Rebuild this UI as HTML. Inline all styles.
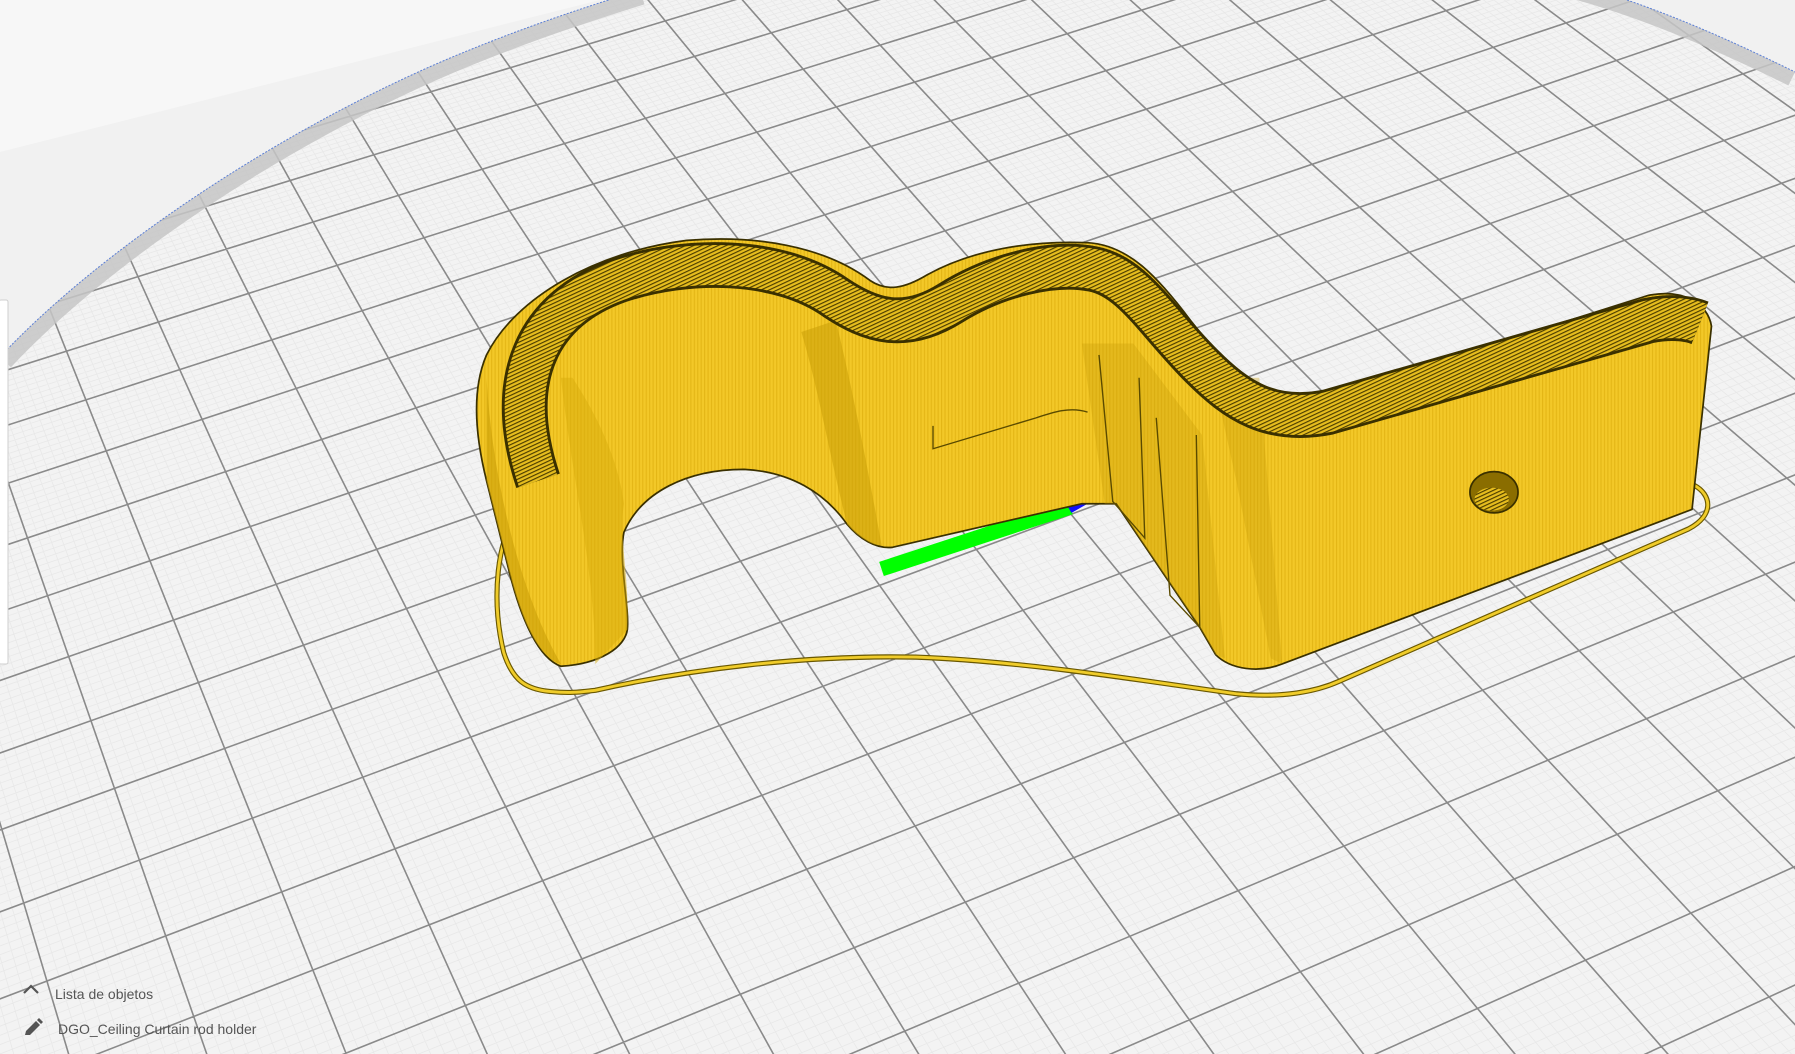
<!DOCTYPE html>
<html><head><meta charset="utf-8"><style>
html,body{margin:0;padding:0;width:1795px;height:1054px;overflow:hidden;background:#f4f4f4;font-family:"Liberation Sans",sans-serif}
svg{position:absolute;left:0;top:0;display:block}
.t{position:absolute;font-size:14px;color:#555;white-space:nowrap;line-height:16px}
</style></head><body>
<svg id="s" width="1795" height="1054" viewBox="0 0 1795 1054">
<defs>
<clipPath id="plate"><path d="M0,357 C100,250 280,130 450,58 C510,33 560,15 640,-10 L1560,-20 C1640,0 1720,35 1795,72 L1800,1060 L-5,1060 Z"/></clipPath>
<pattern id="st" width="3" height="3" patternUnits="userSpaceOnUse" patternTransform="rotate(-25)"><rect width="3" height="3" fill="#e6bd1e"/><rect width="3" height="1" fill="#4a3c00"/></pattern>
<pattern id="vs" width="3" height="6" patternUnits="userSpaceOnUse"><rect width="3" height="6" fill="#f3c828"/><rect width="1" height="6" fill="#e4b616"/></pattern>
</defs>
<rect width="1795" height="1054" fill="#f7f7f7"/>
<path d="M0,152 L600,0 L1795,0 L1795,1054 L0,1054Z" fill="#f1f1f1"/>
<g clip-path="url(#plate)">
<rect width="1795" height="1054" fill="#f3f3f3"/>
<g id="minor" stroke="#e8e8e8" stroke-width="0.8" fill="none"></g>
<g id="major" stroke="#8a8a8a" stroke-width="1.6" fill="none"></g>
<path d="M0,357 C100,250 280,130 450,58 C510,33 560,15 640,-10 M1560,-20 C1640,0 1720,35 1795,72" fill="none" stroke="#c6c6c6" stroke-width="30" opacity="0.85"/>
</g>
<path d="M0,357 C100,250 280,130 450,58 C510,33 560,15 640,-10 M1560,-20 C1640,0 1720,35 1795,72" fill="none" stroke="#5b7fd6" stroke-width="1" stroke-dasharray="2,1.5"/>
<rect x="-1" y="300" width="9" height="364" rx="2" fill="#fff" stroke="#cfcfcf"/>
<g transform="scale(1.1448)">
<g fill="none" stroke-linecap="round">
<path d="M450,452 C436,470 428,520 440,570 C448,595 460,602 480,604 C500,606 510,604 520,603 C600,585 700,572 800,574 C900,578 1000,595 1080,606 C1120,610 1150,604 1170,595 L1475,462 C1498,450 1495,432 1480,424" stroke="#6a5800" stroke-width="4.5"/>
<path d="M450,452 C436,470 428,520 440,570 C448,595 460,602 480,604 C500,606 510,604 520,603 C600,585 700,572 800,574 C900,578 1000,595 1080,606 C1120,610 1150,604 1170,595 L1475,462 C1498,450 1495,432 1480,424" stroke="#f0cc2a" stroke-width="2.5"/>
</g>
<path d="M770,497 L935,443" stroke="#00ff00" stroke-width="13"/>
<path d="M926,432 L950,440 L936,448Z" fill="#1010ff"/>
<path d="M490,582 C470,575 455,540 445,500 L425,420 C415,380 412,340 425,310 C450,260 520,220 600,210 C660,205 720,215 760,245 C775,255 790,252 810,240 C850,218 900,210 950,212 C985,214 1010,240 1040,280 L1080,330 C1100,350 1140,355 1180,340 L1440,258 C1470,252 1492,265 1495,285 L1478,445 L1120,580 C1100,588 1075,585 1062,572 L1048,548 L975,440 L945,440 L780,478 C765,480 750,470 740,458 C720,430 690,412 650,410 C600,410 560,430 545,465 C540,490 550,530 548,550 C546,565 525,580 490,582 Z" fill="url(#vs)" stroke="#3a3000" stroke-width="1.5"/>
<path d="M425,330 C430,420 455,520 490,580 C470,575 455,540 445,500 L425,420Z" fill="#c99e08" opacity=".6"/>
<path d="M490,330 C500,420 520,500 520,580 L548,550 C550,500 540,470 545,440 C540,400 520,360 500,330Z" fill="#d8ab0c" opacity=".5"/>
<path d="M700,290 C715,340 725,400 740,458 C750,470 765,478 770,476 C760,420 745,340 730,280Z" fill="#c99e08" opacity=".55"/>
<path d="M1060,330 L1080,420 L1110,575 L1120,580 L1100,330Z" fill="#c99e08" opacity=".35"/>
<path d="M945,300 L965,440 L975,440 L1048,548 L1062,572 L1070,575 L1050,380 L990,300Z" fill="#c99e08" opacity=".35"/>
<g stroke="#5a4a00" stroke-width="1.2" fill="none">
<path d="M960,310 L972,438 L1000,470 L995,330"/>
<path d="M1010,365 L1022,520 L1048,548 L1045,380"/>
<path d="M815,372 L815,392 L905,365 C920,360 935,355 950,360"/>
</g>
<path d="M470,420 C440,330 470,270 540,245 C600,225 680,225 730,260 C760,280 790,290 830,265 C870,240 920,228 955,235 C990,242 1010,280 1050,320 C1080,350 1110,370 1160,360 L1440,280 C1465,275 1480,280 1485,282" fill="none" stroke="#3a3000" stroke-width="40"/>
<path d="M470,420 C440,330 470,270 540,245 C600,225 680,225 730,260 C760,280 790,290 830,265 C870,240 920,228 955,235 C990,242 1010,280 1050,320 C1080,350 1110,370 1160,360 L1440,280 C1465,275 1480,280 1485,282" fill="none" stroke="url(#st)" stroke-width="35"/>
<ellipse cx="1305" cy="430" rx="21" ry="18" fill="#8a6d00" stroke="#3a3000" stroke-width="1.5"/>
<ellipse cx="1303" cy="436" rx="15" ry="10" fill="url(#st)"/>
</g>
<path d="M24,993 L31,986 L38,993" fill="none" stroke="#555" stroke-width="2.2"/>
<g transform="translate(25,1021)" fill="#555"><path d="M0,14 L1,10 L11,0 L15,4 L5,14Z"/><path d="M12,-1 L14,-3 L18,1 L16,3Z"/></g>
</svg>
<div class="t" style="left:55px;top:986px">Lista de objetos</div>
<div class="t" style="left:58px;top:1021px">DGO_Ceiling Curtain rod holder</div>
<script>
(function(){
var vh=[10000,-2800],vv=[-750,-1700],o=[1283,772],a=0.01172,b=-0.0291;
function P(X,Y){var d=a*X+b*Y+1;if(d<0.03)return null;return[(a*X*vh[0]+b*Y*vv[0]+o[0])/d,(a*X*vh[1]+b*Y*vv[1]+o[1])/d];}
var mi="",ma="";
function seg(p,q){return p&&q?"M"+p[0].toFixed(1)+","+p[1].toFixed(1)+"L"+q[0].toFixed(1)+","+q[1].toFixed(1):"";}
for(var i=-250;i<=250;i++){var X=i/10;var s=seg(P(X,-30),P(X,8));if(i%10==0)ma+=s;else mi+=s;}
for(var j=-300;j<=80;j++){var Y=j/10;var s2=seg(P(-28,Y),P(28,Y));if(j%10==0)ma+=s2;else mi+=s2;}
var ns="http://www.w3.org/2000/svg";
var e1=document.createElementNS(ns,"path");e1.setAttribute("d",mi);document.getElementById("minor").appendChild(e1);
var e2=document.createElementNS(ns,"path");e2.setAttribute("d",ma);document.getElementById("major").appendChild(e2);
})();
</script>
</body></html>
